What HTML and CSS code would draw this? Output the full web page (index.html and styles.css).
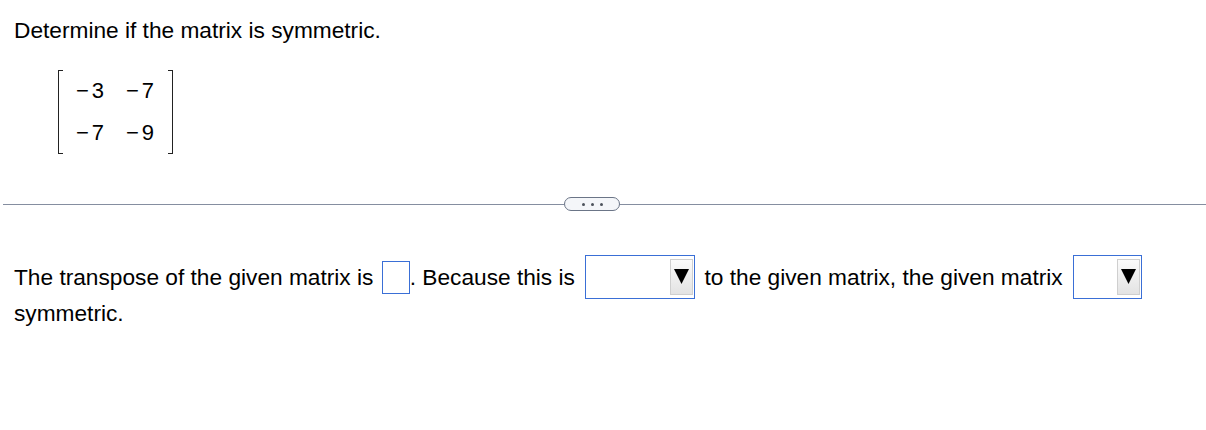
FILE: index.html
```html
<!DOCTYPE html>
<html lang="en">
<head>
<meta charset="utf-8">
<title>Symmetric matrix</title>
<link rel="stylesheet" href="styles.css">
</head>
<body>
<div class="question">
  <p class="prompt">Determine if the matrix is symmetric.</p>
  <div class="matrix">
    <span class="bracket bracket-left"></span>
    <div class="cells">
      <span class="cell"><span class="neg">−</span>3</span>
      <span class="cell"><span class="neg">−</span>7</span>
      <span class="cell"><span class="neg">−</span>7</span>
      <span class="cell"><span class="neg">−</span>9</span>
    </div>
    <span class="bracket bracket-right"></span>
  </div>
</div>
<div class="divider">
  <span class="rule rule-left"></span>
  <span class="pill"><i class="dot"></i><i class="dot"></i><i class="dot"></i></span>
  <span class="rule rule-right"></span>
</div>
<p class="answer">The transpose of the given matrix is <span class="blank"></span>. Because this is <span class="dropdown wide"><span class="drop-btn"><svg width="15" height="15" viewBox="0 0 15 15"><polygon points="0,0 15,0 7.5,15" fill="#000"/></svg></span></span> to the given matrix, the given matrix <span class="dropdown narrow"><span class="drop-btn"><svg width="15" height="15" viewBox="0 0 15 15"><polygon points="0,0 15,0 7.5,15" fill="#000"/></svg></span></span> symmetric.</p>
</body>
</html>
```

FILE: styles.css
```css
html, body {
  margin: 0;
  padding: 0;
  background: #fff;
}
body {
  font-family: "Liberation Sans", Arial, sans-serif;
  font-size: 22.7px;
  color: #000;
  width: 1206px;
}
.question {
  padding-left: 14px;
}
.prompt {
  margin: 17px 0 0 0;
  line-height: 26px;
}
.matrix {
  display: flex;
  margin: 27px 0 0 44px;
  height: 84px;
  width: 115px;
}
.bracket {
  width: 5px;
  border-top: 1px solid #222;
  border-bottom: 1px solid #222;
  box-sizing: border-box;
}
.bracket-left {
  border-left: 1px solid #222;
}
.bracket-right {
  border-right: 1px solid #222;
}
.cells {
  flex: 1;
  display: grid;
  grid-template-columns: 30px 30px;
  grid-template-rows: 40px 40px;
  column-gap: 20px;
  row-gap: 2px;
  padding: 1px 0 0 13px;
  line-height: 40px;
  font-size: 22px;
}
.cell {
  white-space: nowrap;
}
.neg {
  margin-right: 3px;
}
.divider {
  display: flex;
  align-items: center;
  margin: 43px 0 0 3px;
  height: 14px;
}
.rule {
  height: 1px;
  background: #858ea0;
}
.rule-left {
  width: 561px;
}
.rule-right {
  flex: 1;
}
.pill {
  width: 56px;
  height: 14px;
  box-sizing: border-box;
  border: 1px solid #6b7587;
  border-radius: 8px;
  background: #f4f6f9;
  display: flex;
  align-items: center;
  justify-content: center;
  gap: 6px;
}
.dot {
  width: 3px;
  height: 3px;
  border-radius: 50%;
  background: #4d535c;
}
.answer {
  margin: 48px 0 0 0;
  padding: 0 14px;
  line-height: 36px;
}
.blank {
  display: inline-block;
  vertical-align: top;
  width: 28px;
  height: 33px;
  box-sizing: border-box;
  border: 1px solid #3a6fd6;
  margin: 2px 0 1px 2px;
}
.dropdown {
  display: inline-flex;
  justify-content: flex-end;
  align-items: center;
  vertical-align: top;
  height: 44px;
  box-sizing: border-box;
  border: 1px solid #3a6fd6;
  background: #fff;
  margin: -4px 3px -4px 4px;
  padding-right: 1px;
}
.dropdown.wide {
  width: 110px;
}
.dropdown.narrow {
  width: 69px;
}
.drop-btn {
  width: 23px;
  height: 36px;
  box-sizing: border-box;
  border: 1px solid #cfcfcf;
  background: linear-gradient(#fbfbfb, #e3e3e3);
  display: flex;
  align-items: center;
  justify-content: center;
}
.drop-btn svg {
  display: block;
  margin-top: -2px;
}
```
